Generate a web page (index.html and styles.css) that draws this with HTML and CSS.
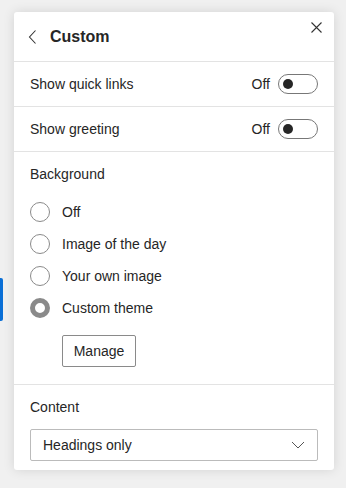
FILE: index.html
```html
<!DOCTYPE html>
<html lang="en">
<head>
    <meta charset="UTF-8">
    <meta name="viewport" content="width=device-width, initial-scale=1.0">
    <title>Custom</title>
    <link rel="stylesheet" href="styles.css">
</head>
<body>
    <div class="side-tab"></div>

    <div class="panel">
        <div class="panel-header">
            <svg class="back" width="10" height="16" viewBox="0 0 10 16">
                <path d="M7.5 1.5 L1.5 8 L7.5 14.5" fill="none" stroke="#333" stroke-width="1.1"/>
            </svg>
            <span class="title">Custom</span>
            <svg class="close" width="11" height="11" viewBox="0 0 11 11">
                <path d="M0.5 0.5 L10.5 10.5 M10.5 0.5 L0.5 10.5" fill="none" stroke="#333" stroke-width="1.1"/>
            </svg>
        </div>

        <div class="row">
            <span>Show quick links</span>
            <div class="toggle-wrap">
                <span>Off</span>
                <div class="toggle"><div class="knob"></div></div>
            </div>
        </div>

        <div class="row">
            <span>Show greeting</span>
            <div class="toggle-wrap">
                <span>Off</span>
                <div class="toggle"><div class="knob"></div></div>
            </div>
        </div>

        <div class="section">
            <div class="section-title">Background</div>
            <div class="radio-list">
                <div class="radio-item"><span class="radio"></span>Off</div>
                <div class="radio-item"><span class="radio"></span>Image of the day</div>
                <div class="radio-item"><span class="radio"></span>Your own image</div>
                <div class="radio-item"><span class="radio checked"></span>Custom theme</div>
            </div>
            <button class="manage">Manage</button>
        </div>

        <div class="section content">
            <div class="section-title">Content</div>
            <div class="select">
                <span>Headings only</span>
                <svg width="14" height="8" viewBox="0 0 14 8">
                    <path d="M1 1 L7 7 L13 1" fill="none" stroke="#555" stroke-width="1"/>
                </svg>
            </div>
        </div>
    </div>
</body>
</html>
```

FILE: styles.css
```css
body {
    font-family: "Liberation Sans", Arial, sans-serif;
    background-color: #f0f0f0;
    margin: 0;
    padding: 12px 12px 0 14px;
    color: #262626;
    font-size: 14px;
    height: 488px;
    box-sizing: border-box;
    overflow: hidden;
}

.side-tab {
    position: absolute;
    left: 0;
    top: 278px;
    width: 3px;
    height: 43px;
    background-color: #0a6fd6;
    border-radius: 0 2px 2px 0;
}

.panel {
    background-color: white;
    width: 320px;
    height: 458px;
    border-radius: 3px;
    box-shadow: 0 0 12px rgba(0, 0, 0, 0.12);
}

.panel-header {
    position: relative;
    display: flex;
    align-items: center;
    height: 50px;
    padding: 1px 0 0 14px;
    box-sizing: border-box;
    border-bottom: 1px solid #e3e3e3;
}

.back {
    margin-right: 12px;
}

.title {
    font-size: 16px;
    font-weight: bold;
    color: #262626;
}

.close {
    position: absolute;
    right: 12px;
    top: 10px;
}

.row {
    display: flex;
    justify-content: space-between;
    align-items: center;
    height: 44px;
    padding: 0 16px;
    border-bottom: 1px solid #e3e3e3;
}

.toggle-wrap {
    display: flex;
    align-items: center;
}

.toggle-wrap span {
    margin-right: 8px;
}

.toggle {
    width: 34px;
    height: 18px;
    border: 1px solid #777;
    border-radius: 10px;
    display: flex;
    align-items: center;
    padding-left: 4px;
    box-sizing: content-box;
}

.knob {
    width: 10px;
    height: 10px;
    border-radius: 50%;
    background-color: #262626;
}

.section {
    padding: 14px 16px 17px;
    border-bottom: 1px solid #e3e3e3;
}

.section-title {
    line-height: 16px;
}

.radio-list {
    margin-top: 20px;
    display: flex;
    flex-direction: column;
    gap: 12px;
}

.radio-item {
    display: flex;
    align-items: center;
    height: 20px;
}

.radio {
    width: 18px;
    height: 18px;
    border: 1px solid #8a8a8a;
    border-radius: 50%;
    margin-right: 12px;
}

.radio.checked {
    width: 10px;
    height: 10px;
    border: 5px solid #8a8a8a;
}

.manage {
    margin: 17px 0 0 32px;
    font-family: "Liberation Sans", Arial, sans-serif;
    font-size: 14px;
    color: #262626;
    background-color: white;
    border: 1px solid #8a8a8a;
    border-radius: 2px;
    width: 74px;
    height: 32px;
    padding: 0;
}

.section.content {
    border-bottom: none;
    padding-top: 14px;
}

.select {
    margin-top: 14px;
    height: 30px;
    border: 1px solid #bbb;
    border-radius: 2px;
    display: flex;
    justify-content: space-between;
    align-items: center;
    padding: 0 12px;
}
```
